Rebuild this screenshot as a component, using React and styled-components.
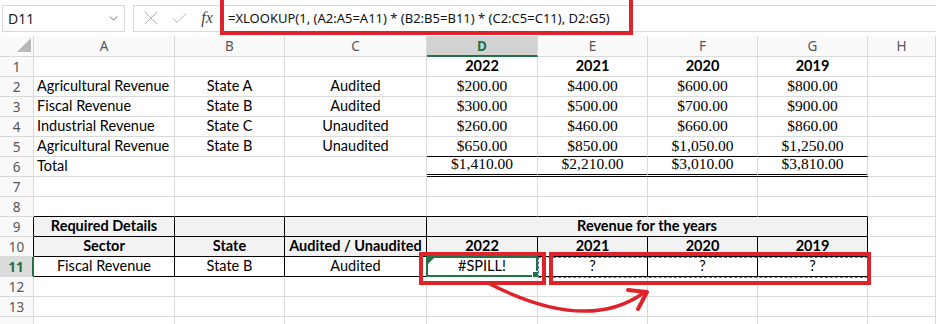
import React from "react";
import styled, { createGlobalStyle } from "styled-components";
import { X, Check, ChevronDown } from "lucide-react";

const GRID = "#dadada";
const INK = "#000";
const RED = "#e0232b";
const GREEN = "#217346";

const GlobalStyle = createGlobalStyle`
  html, body { margin: 0; padding: 0; background: #fff; }
  body { width: 936px; height: 324px; overflow: hidden; }
`;

const Root = styled.div`
  position: relative;
  width: 936px;
  height: 324px;
  overflow: hidden;
  background: #fff;
`;

const Toolbar = styled.div`
  display: flex;
  align-items: center;
  gap: 8px;
  height: 36px;
  padding: 0 0 0 2px;
  box-sizing: border-box;
  background: #fff;
`;

const NameBox = styled.div`
  box-sizing: border-box;
  width: 123px;
  height: 27px;
  display: flex;
  align-items: center;
  justify-content: space-between;
  padding: 0 4px 0 5px;
  border: 1px solid #d9d9d9;
  font: 400 14px "Noto Sans", "Liberation Sans", sans-serif;
  color: #222;
`;

const FormulaField = styled.div`
  box-sizing: border-box;
  flex: 1;
  height: 27px;
  display: flex;
  align-items: center;
  padding-left: 3px;
  border: 1px solid #d9d9d9;
  border-right: none;
`;

const IconSlot = styled.div`
  width: 28px;
  display: flex;
  justify-content: center;
  align-items: center;
  color: #a8a8a8;
`;

const Fx = styled.span`
  font: italic 400 16px "Liberation Serif", serif;
  color: #444;
`;

const FormulaText = styled.div`
  padding-left: 7px;
  font: 400 13px "Noto Sans", "Liberation Sans", sans-serif;
  color: #111;
  white-space: nowrap;
`;

const Sheet = styled.div`
  display: grid;
  grid-template-columns: 34px 141px 110px 142px 111px 110px 110px 110px 1fr;
  grid-template-rows: 21px repeat(14, 20px);
`;

const Corner = styled.div`
  box-sizing: border-box;
  display: flex;
  align-items: flex-end;
  justify-content: flex-end;
  padding: 0 2px 4px 0;
  background: #fafafa;
  border-right: 1px solid ${GRID};
  border-bottom: 1px solid ${GRID};
  &::after {
    content: "";
    width: 0;
    height: 0;
    border-left: 14px solid transparent;
    border-bottom: 14px solid #b8b8b8;
  }
`;

const ColHead = styled.div`
  box-sizing: border-box;
  display: flex;
  align-items: center;
  justify-content: center;
  background: ${p => (p.$active ? "#d2d2d2" : "#fafafa")};
  border-right: 1px solid ${GRID};
  border-bottom: ${p => (p.$active ? `2px solid ${GREEN}` : `1px solid ${GRID}`)};
  font: ${p => (p.$active ? 700 : 400)} 13.5px "Noto Sans", "Liberation Sans", sans-serif;
  color: ${p => (p.$active ? GREEN : "#555")};
`;

const RowHead = styled.div`
  box-sizing: border-box;
  display: flex;
  align-items: center;
  justify-content: center;
  background: ${p => (p.$active ? "#dcdcdc" : "#fafafa")};
  border-right: ${p => (p.$active ? `2px solid ${GREEN}` : `1px solid ${p.$edge ? INK : GRID}`)};
  border-bottom: 1px solid ${GRID};
  font: ${p => (p.$active ? 700 : 400)} 13.5px "Noto Sans", "Liberation Sans", sans-serif;
  color: ${p => (p.$active ? GREEN : "#555")};
`;

const Cell = styled.div`
  position: relative;
  box-sizing: border-box;
  grid-column: span ${p => p.$span || 1};
  display: flex;
  align-items: flex-end;
  justify-content: ${p => (p.$align === "left" ? "flex-start" : "center")};
  padding: 0 3px 1px;
  border-right: 1px solid ${p => (p.$r ? INK : GRID)};
  border-bottom: ${p => (p.$b === "double" ? `3px double ${INK}` : `1px solid ${p.$b ? INK : GRID}`)};
  background: ${p => (p.$fill ? "#f2f2f2" : "#fff")};
  font-family: ${p => (p.$serif ? `"Liberation Serif", serif` : `Lato, "Liberation Sans", sans-serif`)};
  font-size: ${p => (p.$serif ? "15.5px" : "14.5px")};
  font-weight: ${p => (p.$bold ? 700 : 400)};
  line-height: 18px;
  white-space: nowrap;
  color: #000;
`;

const Selection = styled.div`
  position: absolute;
  left: -1px;
  top: -1px;
  right: -1px;
  bottom: -1px;
  border: 2px solid ${GREEN};
  &::before {
    content: "";
    position: absolute;
    left: 0;
    top: 0;
    border-top: 6px solid ${GREEN};
    border-right: 6px solid transparent;
  }
  &::after {
    content: "";
    position: absolute;
    right: -4px;
    bottom: -4px;
    width: 6px;
    height: 6px;
    background: ${GREEN};
    border: 1px solid #fff;
  }
`;

const SpillRange = styled.div`
  position: absolute;
  left: 538px;
  top: 257px;
  width: 330px;
  height: 21px;
  box-sizing: border-box;
  border: 1px dashed #4a76c4;
  pointer-events: none;
`;

const RedBox = styled.div`
  position: absolute;
  box-sizing: border-box;
  border: 4px solid ${RED};
  pointer-events: none;
`;

const Arrow = styled.svg`
  position: absolute;
  left: 0;
  top: 0;
  pointer-events: none;
`;

const cols = ["A", "B", "C", "D", "E", "F", "G", "H"];

const money = (v, extra = {}) => ({ t: v, serif: true, ...extra });

const rows = [
  [{}, {}, {}, { t: "2022", bold: true }, { t: "2021", bold: true }, { t: "2020", bold: true }, { t: "2019", bold: true }, {}],
  [{ t: "Agricultural Revenue", align: "left" }, { t: "State A" }, { t: "Audited" }, money("$200.00"), money("$400.00"), money("$600.00"), money("$800.00"), {}],
  [{ t: "Fiscal Revenue", align: "left" }, { t: "State B" }, { t: "Audited" }, money("$300.00"), money("$500.00"), money("$700.00"), money("$900.00"), {}],
  [{ t: "Industrial Revenue", align: "left" }, { t: "State C" }, { t: "Unaudited" }, money("$260.00"), money("$460.00"), money("$660.00"), money("$860.00"), {}],
  [{ t: "Agricultural Revenue", align: "left" }, { t: "State B" }, { t: "Unaudited" }, money("$650.00", { b: true }), money("$850.00", { b: true }), money("$1,050.00", { b: true }), money("$1,250.00", { b: true }), {}],
  [{ t: "Total", align: "left" }, {}, {}, money("$1,410.00", { b: "double" }), money("$2,210.00", { b: "double" }), money("$3,010.00", { b: "double" }), money("$3,810.00", { b: "double" }), {}],
  [{}, {}, {}, {}, {}, {}, {}, {}],
  [{ b: true }, { b: true }, { b: true }, { b: true }, { b: true }, { b: true }, { b: true }, {}],
  [
    { t: "Required Details", bold: true, fill: true, r: true, b: true },
    { fill: true, r: true, b: true },
    { fill: true, r: true, b: true },
    { t: "Revenue for the years", bold: true, fill: true, r: true, b: true, span: 4 },
    {},
  ],
  [
    { t: "Sector", bold: true, fill: true, r: true, b: true },
    { t: "State", bold: true, fill: true, r: true, b: true },
    { t: "Audited / Unaudited", bold: true, fill: true, r: true, b: true },
    { t: "2022", bold: true, fill: true, r: true, b: true },
    { t: "2021", bold: true, fill: true, r: true, b: true },
    { t: "2020", bold: true, fill: true, r: true, b: true },
    { t: "2019", bold: true, fill: true, r: true, b: true },
    {},
  ],
  [
    { t: "Fiscal Revenue", r: true, b: true },
    { t: "State B", r: true, b: true },
    { t: "Audited", r: true, b: true },
    { t: "#SPILL!", r: true, b: true, selected: true },
    { t: "?", r: true, b: true },
    { t: "?", r: true, b: true },
    { t: "?", r: true, b: true },
    {},
  ],
  [{}, {}, {}, {}, {}, {}, {}, {}],
  [{}, {}, {}, {}, {}, {}, {}, {}],
  [{}, {}, {}, {}, {}, {}, {}, {}],
];

export default function App() {
  return (
    <Root>
      <GlobalStyle />
      <Toolbar>
        <NameBox>
          D11
          <ChevronDown size={13} strokeWidth={1.6} color="#555" />
        </NameBox>
        <FormulaField>
          <IconSlot><X size={24} strokeWidth={0.9} /></IconSlot>
          <IconSlot><Check size={19} strokeWidth={1.1} /></IconSlot>
          <IconSlot><Fx>fx</Fx></IconSlot>
          <FormulaText>=XLOOKUP(1, (A2:A5=A11) * (B2:B5=B11) * (C2:C5=C11), D2:G5)</FormulaText>
        </FormulaField>
      </Toolbar>

      <Sheet>
        <Corner />
        {cols.map(c => (
          <ColHead key={c} $active={c === "D"}>{c}</ColHead>
        ))}
        {rows.map((row, i) => {
          const n = i + 1;
          return (
            <React.Fragment key={n}>
              <RowHead $active={n === 11} $edge={n >= 9 && n <= 11}>{n < 14 ? n : ""}</RowHead>
              {row.map((c, j) => (
                <Cell
                  key={j}
                  $align={c.align}
                  $bold={c.bold}
                  $serif={c.serif}
                  $fill={c.fill}
                  $r={c.r}
                  $b={c.b}
                  $span={c.span}
                >
                  {c.t}
                  {c.selected && <Selection />}
                </Cell>
              ))}
            </React.Fragment>
          );
        })}
      </Sheet>

      <SpillRange />
      <RedBox style={{ left: 220, top: -4, width: 413, height: 39 }} />
      <RedBox style={{ left: 419, top: 252, width: 127, height: 33 }} />
      <RedBox style={{ left: 549, top: 252, width: 322, height: 33 }} />

      <Arrow width="936" height="324" viewBox="0 0 936 324">
        <path d="M488 283 Q585 333 642 294" fill="none" stroke={RED} strokeWidth="3.5" strokeLinecap="round" />
        <path d="M628 290 L647 292 L638 309" fill="none" stroke={RED} strokeWidth="4" strokeLinecap="round" strokeLinejoin="round" />
      </Arrow>
    </Root>
  );
}
